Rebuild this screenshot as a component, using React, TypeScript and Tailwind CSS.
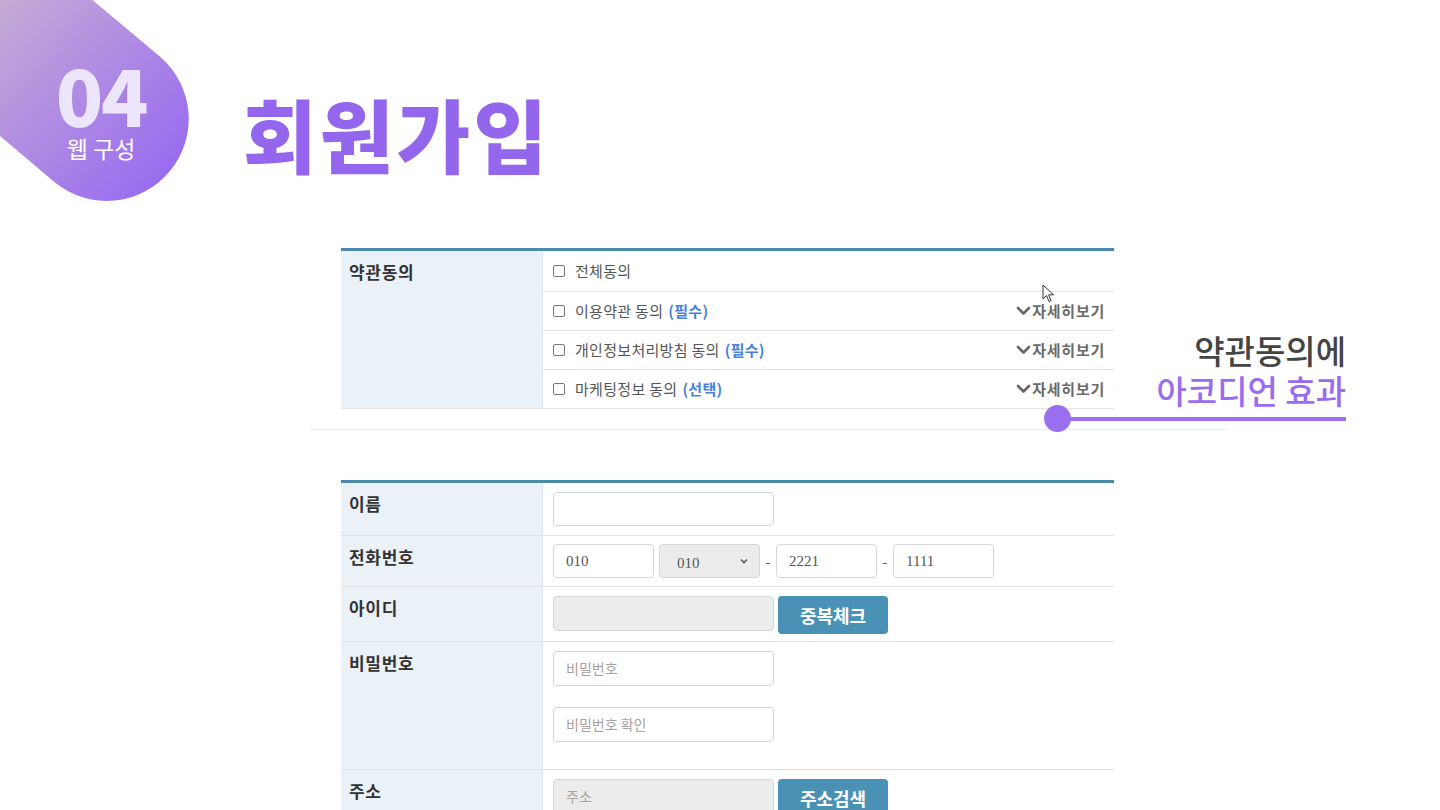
import React from "react";

const Check = () => (
  <span className="inline-block w-[12px] h-[12px] border border-[#777] rounded-[2px] bg-white shrink-0" />
);

const Chevron = () => (
  <svg width="15" height="10" viewBox="0 0 15 10" className="mr-[1px]">
    <path d="M2 2 L7.5 7.5 L13 2" fill="none" stroke="#666" strokeWidth="2.6" strokeLinecap="round" strokeLinejoin="round" />
  </svg>
);

function TermRow({ label, tag, first, more }: { label: string; tag?: string; first?: boolean; more?: boolean }) {
  return (
    <div className={`flex items-center pl-[10px] pr-[9px] ${first ? "h-[40px]" : "h-[39px] border-t border-[#e3e3e3]"}`}>
      <Check />
      <span className="ml-[10px] text-[15px] tracking-[0.02em] text-[#555]">{label}</span>
      {tag && <span className="ml-[5px] text-[15px] tracking-[0.02em] font-semibold text-[#4a80d8]">{tag}</span>}
      {more && (
        <span className="ml-auto flex items-center text-[15px] font-bold text-[#6a6a6a] tracking-[0.05em]">
          <Chevron />
          자세히보기
        </span>
      )}
    </div>
  );
}

function Label({ children }: { children: React.ReactNode }) {
  return (
    <div className="w-[202px] shrink-0 bg-[#eaf2f8] border-r border-[#dde6ee] pl-[8px] pt-[9px] text-[17px] leading-[24px] font-bold tracking-[0.04em] text-[#333]">
      {children}
    </div>
  );
}

const inputBase = "h-[34px] rounded-[4px] border border-[#d6d6d6] px-[12px] flex items-center";

export default function App() {
  return (
    <div className="relative w-[1440px] h-[810px] overflow-hidden bg-white font-['Noto_Sans_CJK_KR','Noto_Sans',sans-serif]">
      {/* Header */}
      <header className="flex h-[248px] items-start">
        <div className="relative w-[192px] h-[205px] shrink-0">
          <svg width="192" height="205" viewBox="0 0 192 205">
            <defs>
              <linearGradient id="bg" x1="0" y1="0" x2="1" y2="1">
                <stop offset="0" stopColor="#c6abd6" />
                <stop offset="1" stopColor="#9463f3" />
              </linearGradient>
            </defs>
            <path d="M92.5 0 L160.7 57.2 A82 82 0 0 1 55.3 182.8 L0 136 L0 0 Z" fill="url(#bg)" />
          </svg>
          <div className="absolute left-[51px] top-[61px] w-[100px] flex flex-col items-center">
            <span className="text-[78px] leading-[64px] font-black text-[#ede5fb] tracking-[-0.03em]">04</span>
            <span className="mt-[9px] text-[23px] leading-[28px] text-white">웹 구성</span>
          </div>
        </div>
        <h1 className="ml-[51px] mt-[84px] text-[80px] leading-[96px] font-black text-[#9466ee] tracking-[0.04em]">
          회원가입
        </h1>
      </header>

      {/* Terms table */}
      <div className="ml-[341px] w-[773px] border-t-[3px] border-t-[#4b89aa] border-b border-b-[#e3e3e3] flex">
        <Label>약관동의</Label>
        <div className="flex-1 flex flex-col">
          <TermRow first label="전체동의" />
          <TermRow label="이용약관 동의" tag="(필수)" more />
          <TermRow label="개인정보처리방침 동의" tag="(필수)" more />
          <TermRow label="마케팅정보 동의" tag="(선택)" more />
        </div>
      </div>

      <div className="ml-[310px] mt-[20px] w-[917px] h-px bg-[#ededed]" />

      {/* Member form */}
      <div className="ml-[341px] mt-[50px] w-[773px] border-t-[3px] border-t-[#4b89aa] flex flex-col">
        <div className="flex h-[53px] border-b border-[#e3e3e3]">
          <Label>이름</Label>
          <div className="flex-1 pl-[10px] pt-[9px]">
            <div className={`${inputBase} w-[221px] bg-white`} />
          </div>
        </div>
        <div className="flex h-[51px] border-b border-[#e3e3e3]">
          <Label>전화번호</Label>
          <div className="flex-1 pl-[10px] pt-[8px] flex items-start">
            <div className={`${inputBase} w-[101px] bg-white font-['Liberation_Serif',serif] text-[15px] text-[#555]`}>010</div>
            <div className={`ml-[5px] ${inputBase} w-[101px] bg-[#ececec] pl-[17px] pr-[10px] font-['Liberation_Serif',serif] text-[15px] text-[#555]`}>
              <span className="mt-[4px]">010</span>
              <svg width="10" height="8" viewBox="0 0 10 8" className="ml-auto">
                <path d="M2 2.5 L5 5.5 L8 2.5" fill="none" stroke="#555" strokeWidth="1.6" />
              </svg>
            </div>
            <span className="w-[16px] h-[34px] flex items-center justify-center text-[#555] text-[14px]">-</span>
            <div className={`${inputBase} w-[101px] bg-white font-['Liberation_Serif',serif] text-[15px] text-[#555]`}>2221</div>
            <span className="w-[16px] h-[34px] flex items-center justify-center text-[#555] text-[14px]">-</span>
            <div className={`${inputBase} w-[101px] bg-white font-['Liberation_Serif',serif] text-[15px] text-[#555]`}>1111</div>
          </div>
        </div>
        <div className="flex h-[55px] border-b border-[#e3e3e3]">
          <Label>아이디</Label>
          <div className="flex-1 pl-[10px] pt-[9px] flex items-start gap-[4px]">
            <div className={`${inputBase} h-[35px] w-[221px] bg-[#ececec]`} />
            <button className="h-[38px] w-[110px] rounded-[4px] bg-[#4a91b6] text-white text-[18px] font-bold">중복체크</button>
          </div>
        </div>
        <div className="flex h-[128px] border-b border-[#e3e3e3]">
          <Label>비밀번호</Label>
          <div className="flex-1 pl-[10px] pt-[9px] flex flex-col gap-[21px]">
            <div className={`${inputBase} h-[35px] w-[221px] bg-white text-[14px] text-[#a9a0a0]`}>비밀번호</div>
            <div className={`${inputBase} h-[35px] w-[221px] bg-white text-[14px] text-[#a9a0a0]`}>비밀번호 확인</div>
          </div>
        </div>
        <div className="flex h-[60px]">
          <Label>주소</Label>
          <div className="flex-1 pl-[10px] pt-[9px] flex items-start gap-[4px]">
            <div className={`${inputBase} h-[35px] w-[221px] bg-[#ececec] text-[14px] text-[#a9a0a0]`}>주소</div>
            <button className="h-[38px] w-[110px] rounded-[4px] bg-[#4a91b6] text-white text-[18px] font-bold">주소검색</button>
          </div>
        </div>
      </div>

      {/* Annotation callout */}
      <div className="absolute left-[1044px] top-[330px] w-[302px] flex flex-col items-end">
        <span className="text-[33px] leading-[40px] font-medium text-[#444]">약관동의에</span>
        <span className="text-[33px] leading-[40px] font-medium text-[#9a6cf0]">아코디언 효과</span>
        <div className="-mt-[5px] w-full flex items-center">
          <span className="w-[27px] h-[27px] rounded-full bg-[#9a70f0] shrink-0" />
          <span className="-ml-[2px] flex-1 h-[4px] bg-[#9a70f0]" />
        </div>
      </div>

      {/* Mouse cursor */}
      <svg className="absolute left-[1042px] top-[284px]" width="14" height="20" viewBox="0 0 14 20">
        <path d="M1 1 L1 15 L4.5 11.5 L7 17.5 L9 16.6 L6.6 10.8 L11.5 10.8 Z" fill="#fff" stroke="#333" strokeWidth="1" strokeLinejoin="round" />
      </svg>
    </div>
  );
}
